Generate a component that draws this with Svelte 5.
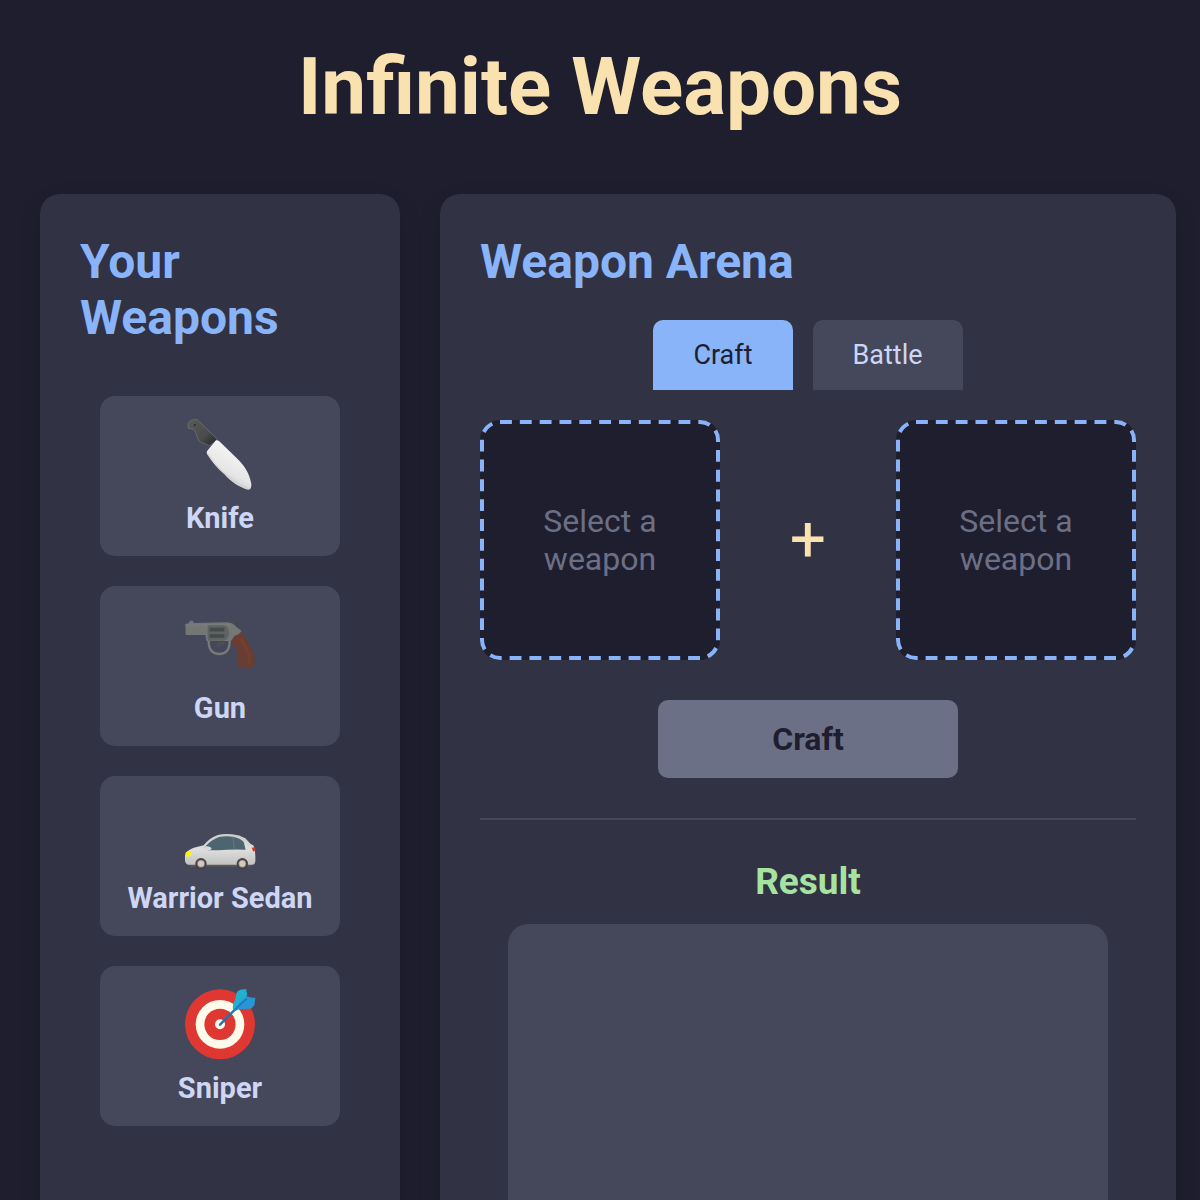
<script>
  let tab = $state('craft');
  const weapons = [
    { id: 'knife', name: 'Knife' },
    { id: 'gun', name: 'Gun' },
    { id: 'car', name: 'Warrior Sedan' },
    { id: 'target', name: 'Sniper' }
  ];
</script>

{#snippet icon(id)}
  {#if id === 'knife'}
    <svg class="icon" viewBox="42 24 216 216" aria-hidden="true">
      <defs>
        <linearGradient id="handle" x1="0" y1="0" x2="1" y2="1">
          <stop offset="0" stop-color="#58595a" /><stop offset=".6" stop-color="#4b4b4b" /><stop offset="1" stop-color="#222427" />
        </linearGradient>
        <linearGradient id="blade" x1=".6" y1=".2" x2=".3" y2=".8">
          <stop offset="0" stop-color="#f4f4f4" /><stop offset=".65" stop-color="#e6e6e6" /><stop offset="1" stop-color="#cdcdcd" />
        </linearGradient>
      </defs>
      <path d="M54 46C54 34 67 27 82 29L138 84Q143 89 138 93L119 107Q112 105 106 102Q88 98 84 86C78 73 79 65 71 58Q60 54 55 56Z" fill="url(#handle)" stroke="#777a78" stroke-width="2" />
      <circle cx="74" cy="45" r="3" fill="#292a2a" />
      <path d="M138 91Q145 89 151 97L199 143C224 166 239 191 244 222Q245 240 234 239C208 233 183 215 163 193Q135 170 111 132Q108 126 113 121Z" fill="url(#blade)" />
      <path d="M113 130Q143 177 187 209Q209 226 236 236" fill="none" stroke="#c8c8c8" stroke-width="2" />
    </svg>
  {:else if id === 'gun'}
    <svg class="icon" viewBox="42 24 216 216" aria-hidden="true">
      <path d="M188 75L210 62L222 66L218 71L207 73Q214 82 225 80L217 88Q198 88 188 75" fill="#424956" />
      <path d="M207 97Q216 96 221 103Q224 112 232 124L250 157Q258 181 251 200Q238 207 213 201Q201 197 203 187L204 164Q200 142 183 125L191 108Z" fill="#693d31" />
      <path d="M210 112Q222 133 232 154T238 190" fill="none" stroke="#70412f" stroke-width="10" />
      <path d="M116 123Q115 161 149 162Q180 160 179 122" fill="none" stroke="#777978" stroke-width="7" />
      <path d="M139 128Q139 139 144 144Q149 135 162 134L166 125Z" fill="#4c5053" />
      <path d="M46 72L56 70L60 62L68 62L72 69L171 67Q189 68 199 81L215 93Q207 105 194 107L183 123H109L106 105H47Z" fill="#757777" />
      <path d="M47 75H182" stroke="#7d7f7e" stroke-width="3" />
      <path d="M117 76H163Q177 81 177 99T163 122H117Q113 122 113 118V80Q113 76 117 76Z" fill="#606363" />
      <path d="M119 89H163M119 108H163" stroke="#454a4b" stroke-width="11" />
    </svg>
  {:else if id === 'car'}
    <svg class="icon" viewBox="42 -51 216 216" aria-hidden="true">
      <defs>
        <linearGradient id="body" x1="0" y1="0" x2="0" y2="1">
          <stop offset="0" stop-color="#ccc" /><stop offset=".5" stop-color="#dedede" /><stop offset="1" stop-color="#c2c2c2" />
        </linearGradient>
      </defs>
      <path d="M56 147H240L247 151L239 155H61Z" fill="#575758" />
      <path d="M45 136Q43 122 48 113Q57 102 80 96L101 91Q119 68 143 60Q160 56 187 58Q208 60 226 70L242 87L250 91Q257 105 256 131Q258 145 249 149H54Q45 146 45 136Z" fill="url(#body)" />
      <path d="M104 96Q127 72 147 66Q170 62 192 66Q213 71 221 81L227 104Q186 102 145 106L118 106Q103 106 104 96Z" fill="#4c6570" />
      <path d="M189 65L193 104" stroke="#667982" stroke-width="3" />
      <path d="M105 94Q122 92 125 102Q119 108 104 105Q100 101 105 94Z" fill="#d9d9d9" />
      <path d="M47 113Q51 107 65 111L66 121Q60 127 46 124Z" fill="#f5f319" />
      <path d="M245 98L254 97L257 106L250 110Z" fill="#c93e2c" />
      <circle cx="93" cy="146" r="17" fill="#424143" />
      <circle cx="217" cy="146" r="17" fill="#424143" />
      <circle cx="93" cy="146" r="11" fill="#d0c9c5" stroke="#85665d" stroke-width="2" />
      <circle cx="217" cy="146" r="11" fill="#d0c9c5" stroke="#85665d" stroke-width="2" />
    </svg>
  {:else}
    <svg class="icon" viewBox="42 39 216 216" aria-hidden="true">
      <circle cx="150" cy="148" r="105" fill="#df3732" />
      <circle cx="150" cy="148" r="73" fill="#fffbea" />
      <circle cx="150" cy="148" r="47" fill="#df3732" />
      <circle cx="150" cy="148" r="15" fill="#fffbea" />
      <path d="M150 149L211 87" stroke="#1976b8" stroke-width="7" stroke-linecap="round" />
      <path d="M190 107Q185 91 195 75L201 50Q212 41 230 43Q226 49 232 57L228 69L203 98Z" fill="#22b0d0" />
      <path d="M190 108Q199 93 212 79L231 64Q248 70 256 68L253 91Q248 100 239 101L208 103Q197 106 190 111Z" fill="#2996d4" />
      <path d="M191 108L230 71" stroke="#187bb8" stroke-width="5" />
    </svg>
  {/if}
{/snippet}

{#snippet slot()}
  <button class="slot">
    <svg class="dashes" viewBox="0 0 240 240" aria-hidden="true">
      <rect x="2" y="2" width="236" height="236" rx="18" pathLength="920" />
    </svg>
    <span>Select a weapon</span>
  </button>
{/snippet}

<div class="page">
  <header><h1>Infinite Weapons</h1></header>
  <main>
    <section class="panel">
      <h2>Your Weapons</h2>
      <div class="weapons">
        {#each weapons as weapon}
          <button class="weapon">
            {@render icon(weapon.id)}
            <span>{weapon.name}</span>
          </button>
        {/each}
      </div>
    </section>

    <section class="panel">
      <h2>Weapon Arena</h2>
      <div class="tabs">
        <button class:active={tab === 'craft'} onclick={() => (tab = 'craft')}>Craft</button>
        <button class:active={tab === 'battle'} onclick={() => (tab = 'battle')}>Battle</button>
      </div>
      <div class="slots">
        {@render slot()}
        <span class="plus">+</span>
        {@render slot()}
      </div>
      <button class="craft" disabled>Craft</button>
      <div class="result">
        <h3>Result</h3>
        <div class="output"></div>
      </div>
    </section>
  </main>
</div>

<style>
  :global(body) {
    margin: 0;
    background: #1e1e2e;
  }
  .page {
    font-family: Roboto, sans-serif;
    color: #cdd6f4;
    padding-bottom: 40px;
  }
  * {
    box-sizing: border-box;
  }
  button {
    font-family: inherit;
    border: 0;
    margin: 0;
    color: inherit;
    cursor: pointer;
  }
  h1, h2, h3 {
    margin: 0;
    font-weight: 700;
  }
  header {
    padding: 40px 0 60px;
    text-align: center;
  }
  h1 {
    font-size: 80px;
    line-height: 94px;
    color: #f9e2af;
  }
  main {
    display: grid;
    grid-template-columns: 360px 1fr;
    gap: 40px;
    padding: 0 24px 0 40px;
  }
  .panel {
    padding: 40px;
    border-radius: 20px;
    background: #313244;
    box-shadow: 0 8px 24px rgba(0, 0, 0, 0.1);
  }
  h2 {
    font-size: 48px;
    line-height: 56px;
    color: #89b4fa;
    margin-bottom: 30px;
  }
  .weapons {
    display: flex;
    flex-direction: column;
    gap: 30px;
    padding: 20px;
  }
  .weapon {
    display: flex;
    flex-direction: column;
    align-items: center;
    gap: 8px;
    padding: 22px 10px 18px;
    border-radius: 15px;
    background: #45475a;
    font-size: 29px;
    line-height: 40px;
    font-weight: 700;
  }
  .icon {
    width: 72px;
    height: 72px;
  }
  .tabs {
    display: flex;
    justify-content: center;
    gap: 20px;
    margin-bottom: 30px;
  }
  .tabs button {
    padding: 20px 40px;
    border-radius: 10px 10px 0 0;
    background: #45475a;
    font-size: 27px;
    line-height: 30px;
  }
  .tabs .active {
    background: #89b4fa;
    color: #1e1e2e;
  }
  .slots {
    display: flex;
    justify-content: space-between;
    align-items: center;
  }
  .slot {
    position: relative;
    display: flex;
    align-items: center;
    justify-content: center;
    width: 240px;
    height: 240px;
    padding: 40px;
    border-radius: 20px;
    background: #1e1e2e;
    color: #6c7086;
    font-size: 32px;
    line-height: 38px;
  }
  .dashes {
    position: absolute;
    inset: 0;
  }
  .dashes rect {
    fill: none;
    stroke: #89b4fa;
    stroke-width: 4;
    stroke-dasharray: 12 8;
  }
  .plus {
    font-size: 64px;
    line-height: 76px;
    color: #f9e2af;
  }
  .craft {
    display: block;
    width: 300px;
    margin: 40px auto;
    padding: 20px;
    border-radius: 10px;
    background: #6c7086;
    color: #1e1e2e;
    font-size: 32px;
    line-height: 38px;
    font-weight: 700;
  }
  .result {
    border-top: 2px solid #45475a;
    padding-top: 40px;
    text-align: center;
  }
  h3 {
    font-size: 37px;
    line-height: 44px;
    color: #a6e3a1;
    margin-bottom: 20px;
  }
  .output {
    max-width: 600px;
    min-height: 400px;
    margin: 0 auto;
    border-radius: 20px;
    background: #45475a;
  }
</style>
